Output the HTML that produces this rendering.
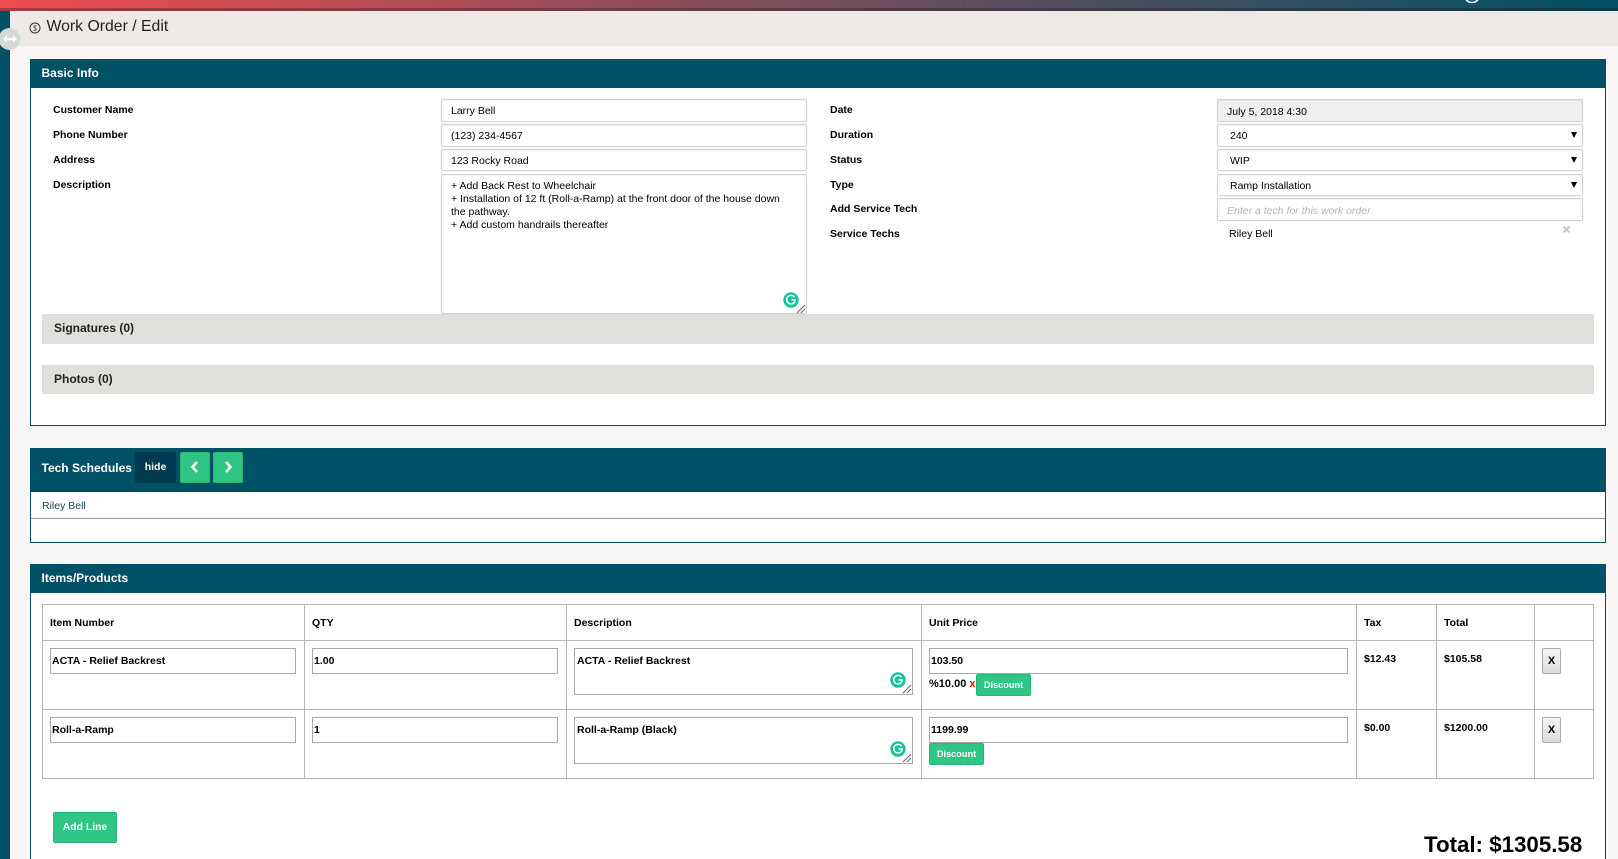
<!DOCTYPE html>
<html><head><meta charset="utf-8"><title>Work Order / Edit</title>
<style>
html,body{margin:0;padding:0}
body{width:1618px;height:859px;overflow:hidden;position:relative;background:#f8f7f5;font-family:"Liberation Sans",Arial,sans-serif;font-size:11px;color:#000}
div,span{position:absolute;box-sizing:border-box}
.t{white-space:nowrap;line-height:13px;font-size:10.5px;margin-top:1px}
.h{margin-top:0;font-size:12px;line-height:15px}
.b{font-weight:bold}
.tl{background:#005066}
.in{background:#fff;border:1px solid #d2d2d2;border-radius:2px;box-shadow:inset 0 1px 1px rgba(0,0,0,.06),0 0 1px #ddd}
.ti{background:#fff;border:1px solid #a9a9a9}
.g{background:#2fc584;border:1px solid #27b678;border-radius:2px;color:#fff;font-weight:bold;text-align:center}
.ln{background:#adb9bb}
.ar{width:0;height:0;border-left:3.500px solid transparent;border-right:3.500px solid transparent;border-top:6px solid #000;left:1571px}
.x{background:linear-gradient(#f5f5f5,#dcdcdc);border:1px solid #aaa;border-radius:2px;font-weight:bold;font-size:11px;line-height:25px;text-align:center;width:19px;height:26px;left:1542px}
svg{position:absolute;display:block}
</style></head><body>

<div style="left:0;top:0;width:1618px;height:8px;background:linear-gradient(90deg,#f04c50,#005066)"></div>
<div style="left:0;top:8px;width:1618px;height:3px;background:linear-gradient(90deg,#a83a42,#0c3a4c)"></div>
<svg style="left:1460px;top:0" width="24" height="4"><circle cx="12" cy="-5" r="7.500" fill="none" stroke="#fff" stroke-width="1.500"/></svg>

<div class="tl" style="left:0;top:11px;width:10px;height:848px"></div>
<div style="left:10px;top:11px;width:1608px;height:35px;background:#ece9e6"></div>

<svg style="left:0;top:27px" width="22" height="24"><circle cx="9.500" cy="12" r="11" fill="#d4d8d6"/><path d="M3 12l4-3.500v2.300h6V8.500l4 3.500-4 3.500v-2.300H7v2.300z" fill="#fff"/></svg>

<svg style="left:29px;top:22px" width="12" height="12"><circle cx="6" cy="6" r="5" fill="#eee" stroke="#333" stroke-width="1"/><path d="M7.700 4.300C7 3.400 4.600 3.500 4.600 4.800S7.500 5.900 7.500 7.300 5 8.700 4.300 7.800M6 2.800v6.400" fill="none" stroke="#555" stroke-width=".7"/></svg>
<div class="t h" style="left:46.500px;top:17px;font-size:15.800px;line-height:20px;color:#222">Work Order / Edit</div>

<!-- Basic info panel -->
<div style="left:30px;top:59px;width:1576px;height:367px;background:#fff;border:1px solid #005066"></div>
<div class="tl" style="left:30px;top:59px;width:1576px;height:29px"></div>
<div class="t b h" style="left:41.500px;top:66px;color:#fff">Basic Info</div>

<div class="t b" style="left:53px;top:103px">Customer Name</div>
<div class="t b" style="left:53px;top:128px">Phone Number</div>
<div class="t b" style="left:53px;top:153px">Address</div>
<div class="t b" style="left:53px;top:178px">Description</div>

<div class="in" style="left:441px;top:99px;width:366px;height:23px"></div>
<div class="in" style="left:441px;top:124px;width:366px;height:23px"></div>
<div class="in" style="left:441px;top:149px;width:366px;height:22px"></div>
<div class="in" style="left:441px;top:174px;width:366px;height:140px"></div>
<div class="t" style="left:451px;top:104px">Larry Bell</div>
<div class="t" style="left:451px;top:129px">(123) 234-4567</div>
<div class="t" style="left:451px;top:154px">123 Rocky Road</div>
<div class="t" style="left:451px;top:179px">+ Add Back Rest to Wheelchair</div>
<div class="t" style="left:451px;top:192px">+ Installation of 12 ft (Roll-a-Ramp) at the front door of the house down</div>
<div class="t" style="left:451px;top:205px">the pathway.</div>
<div class="t" style="left:451px;top:218px">+ Add custom handrails thereafter</div>
<svg style="left:783px;top:292px" width="16" height="16"><circle cx="8" cy="8" r="7.700" fill="#15c39a"/><path d="M11.500 5.200A4.300 4.300 0 1 0 12.300 8H8.500" fill="none" stroke="#fff" stroke-width="1.500"/></svg>
<svg style="left:796px;top:304px" width="10" height="10"><path d="M1 9L9 1M5 9L9 5" stroke="#666" stroke-width="1"/></svg>

<div class="t b" style="left:830px;top:103px">Date</div>
<div class="t b" style="left:830px;top:128px">Duration</div>
<div class="t b" style="left:830px;top:153px">Status</div>
<div class="t b" style="left:830px;top:178px">Type</div>
<div class="t b" style="left:830px;top:202px">Add Service Tech</div>
<div class="t b" style="left:830px;top:227px">Service Techs</div>

<div class="in" style="left:1217px;top:99px;width:366px;height:23px;background:#efefee"></div>
<div class="in" style="left:1217px;top:124px;width:366px;height:23px"></div>
<div class="in" style="left:1217px;top:149px;width:366px;height:22px"></div>
<div class="in" style="left:1217px;top:174px;width:366px;height:22px"></div>
<div class="in" style="left:1217px;top:198px;width:366px;height:23px"></div>
<div class="t" style="left:1227px;top:104.500px">July 5, 2018 4:30</div>
<div class="t" style="left:1230px;top:129px">240</div>
<div class="t" style="left:1230px;top:154px">WIP</div>
<div class="t" style="left:1230px;top:179px">Ramp Installation</div>
<div class="t" style="left:1227px;top:204px;font-style:italic;color:#b5b5b5">Enter a tech for this work order</div>
<div class="t" style="left:1229px;top:227px">Riley Bell</div>
<div class="ar" style="top:132px"></div>
<div class="ar" style="top:157px"></div>
<div class="ar" style="top:182px"></div>
<svg style="left:1562px;top:225px" width="10" height="10"><path d="M1.500 1.500l6 6M7.500 1.500l-6 6" stroke="#c9c9c9" stroke-width="2"/></svg>

<div style="left:42px;top:314px;width:1552px;height:30px;background:#e0dfdb"></div>
<div class="t b h" style="left:54px;top:321px;color:#222">Signatures (0)</div>
<div style="left:42px;top:365px;width:1552px;height:29px;background:#e0dfdb"></div>
<div class="t b h" style="left:54px;top:372px;color:#222">Photos (0)</div>

<!-- Tech schedules -->
<div style="left:30px;top:448px;width:1576px;height:95px;background:#fff;border:1px solid #005066"></div>
<div class="tl" style="left:30px;top:448px;width:1576px;height:44px"></div>
<div class="t b h" style="left:41.500px;top:461px;color:#fff">Tech Schedules</div>
<div class="t b" style="left:135px;top:451px;width:41px;height:31px;background:#003a50;border-radius:2px;color:#fff;text-align:center;line-height:30px">hide</div>
<div class="g" style="left:180px;top:452px;width:30px;height:31px"></div>
<div class="g" style="left:213px;top:452px;width:30px;height:31px"></div>
<svg style="left:189px;top:460px" width="12" height="14"><path d="M8 2L3.500 7 8 12" fill="none" stroke="#fff" stroke-width="2.600"/></svg>
<svg style="left:222px;top:460px" width="12" height="14"><path d="M4 2L8.500 7 4 12" fill="none" stroke="#fff" stroke-width="2.600"/></svg>
<div class="t" style="left:42px;top:499px;color:#1c4452">Riley Bell</div>
<div class="ln" style="left:31px;top:518px;width:1574px;height:1px;background:#8d9fa3"></div>

<!-- Items -->
<div style="left:30px;top:564px;width:1576px;height:295px;background:#fff;border:1px solid #005066;border-bottom:0"></div>
<div class="tl" style="left:30px;top:564px;width:1576px;height:29px"></div>
<div class="t b h" style="left:41.500px;top:571px;color:#fff">Items/Products</div>

<div class="ln" style="left:42px;top:604px;width:1552px;height:1px"></div>
<div class="ln" style="left:42px;top:640px;width:1552px;height:1px"></div>
<div class="ln" style="left:42px;top:709px;width:1552px;height:1px"></div>
<div class="ln" style="left:42px;top:778px;width:1552px;height:1px"></div>
<div class="ln" style="left:42px;top:604px;width:1px;height:175px"></div>
<div class="ln" style="left:304px;top:604px;width:1px;height:175px"></div>
<div class="ln" style="left:566px;top:604px;width:1px;height:175px"></div>
<div class="ln" style="left:921px;top:604px;width:1px;height:175px"></div>
<div class="ln" style="left:1356px;top:604px;width:1px;height:175px"></div>
<div class="ln" style="left:1436px;top:604px;width:1px;height:175px"></div>
<div class="ln" style="left:1534px;top:604px;width:1px;height:175px"></div>
<div class="ln" style="left:1593px;top:604px;width:1px;height:175px"></div>

<div class="t b" style="left:50px;top:616px">Item Number</div>
<div class="t b" style="left:312px;top:616px">QTY</div>
<div class="t b" style="left:574px;top:616px">Description</div>
<div class="t b" style="left:929px;top:616px">Unit Price</div>
<div class="t b" style="left:1364px;top:616px">Tax</div>
<div class="t b" style="left:1444px;top:616px">Total</div>

<div class="ti" style="left:50px;top:648px;width:246px;height:26px"></div>
<div class="ti" style="left:312px;top:648px;width:246px;height:26px"></div>
<div class="ti" style="left:574px;top:648px;width:339px;height:47px"></div>
<div class="ti" style="left:929px;top:648px;width:419px;height:26px"></div>
<div class="ti" style="left:50px;top:717px;width:246px;height:26px"></div>
<div class="ti" style="left:312px;top:717px;width:246px;height:26px"></div>
<div class="ti" style="left:574px;top:717px;width:339px;height:47px"></div>
<div class="ti" style="left:929px;top:717px;width:419px;height:26px"></div>

<div class="t b" style="left:52px;top:654px">ACTA - Relief Backrest</div>
<div class="t b" style="left:314px;top:654px">1.00</div>
<div class="t b" style="left:577px;top:654px">ACTA - Relief Backrest</div>
<div class="t b" style="left:931px;top:654px">103.50</div>
<div class="t b" style="left:929px;top:677px;font-size:11px">%10.00 <span style="position:static;color:#f00">x</span></div>
<div class="g" style="left:976px;top:674px;width:55px;height:22px;font-size:9.200px;line-height:20px">Discount</div>
<div class="t b" style="left:1364px;top:652px">$12.43</div>
<div class="t b" style="left:1444px;top:652px">$105.58</div>
<div class="x" style="top:648px">X</div>

<div class="t b" style="left:52px;top:723px">Roll-a-Ramp</div>
<div class="t b" style="left:314px;top:723px">1</div>
<div class="t b" style="left:577px;top:723px">Roll-a-Ramp (Black)</div>
<div class="t b" style="left:931px;top:723px">1199.99</div>
<div class="g" style="left:929px;top:743px;width:55px;height:22px;font-size:9.200px;line-height:20px">Discount</div>
<div class="t b" style="left:1364px;top:721px">$0.00</div>
<div class="t b" style="left:1444px;top:721px">$1200.00</div>
<div class="x" style="top:717px">X</div>

<svg style="left:890px;top:672px" width="16" height="16"><circle cx="8" cy="8" r="7.700" fill="#15c39a"/><path d="M11.500 5.200A4.300 4.300 0 1 0 12.300 8H8.500" fill="none" stroke="#fff" stroke-width="1.500"/></svg>
<svg style="left:890px;top:741px" width="16" height="16"><circle cx="8" cy="8" r="7.700" fill="#15c39a"/><path d="M11.500 5.200A4.300 4.300 0 1 0 12.300 8H8.500" fill="none" stroke="#fff" stroke-width="1.500"/></svg>
<svg style="left:902px;top:684px" width="10" height="10"><path d="M1 9L9 1M5 9L9 5" stroke="#666"/></svg>
<svg style="left:902px;top:753px" width="10" height="10"><path d="M1 9L9 1M5 9L9 5" stroke="#666"/></svg>

<div class="g" style="left:53px;top:812px;width:64px;height:31px;font-size:10.400px;line-height:29px">Add Line</div>
<div class="t b h" style="left:1424px;top:831px;font-size:22.300px;line-height:28px">Total: $1305.58</div>
</body></html>
